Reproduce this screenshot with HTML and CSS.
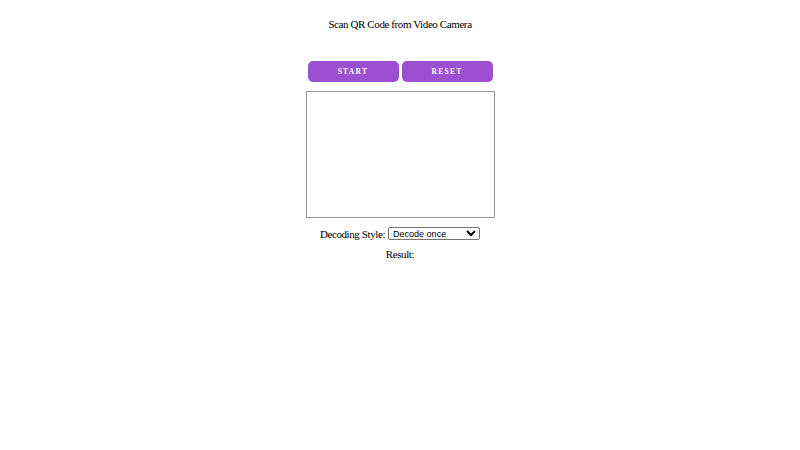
FILE: index.html
```html
<!DOCTYPE html>
<html lang="en">
<head>
    <meta charset="UTF-8">
    <meta name="viewport" content="width=device-width, initial-scale=1.0">
    <title>Scan QR Code</title>
    <link rel="stylesheet" href="styles.css">
</head>
<body>
    <div class="page">
        <p class="title">Scan QR Code from Video Camera</p>

        <div class="controls">
            <button id="startButton" class="btn">Start</button>
            <button id="resetButton" class="btn">Reset</button>
        </div>

        <div class="video-box">
            <video id="video" width="187" height="125"></video>
        </div>

        <div class="decode-row">
            <label for="decodingStyle">Decoding Style:</label>
            <select id="decodingStyle">
                <option value="once">Decode once</option>
                <option value="continuously">Decode continuously</option>
            </select>
        </div>

        <div class="result">
            <label>Result:</label>
            <span id="result"></span>
        </div>
    </div>
</body>
</html>
```

FILE: styles.css
```css
/* General Styles */
body {
    margin: 0;
    font-family: "Liberation Serif", "Times New Roman", serif;
    font-size: 11px;
    letter-spacing: -0.4px;
    color: #000;
    background: #fff;
}

.page {
    display: flex;
    flex-direction: column;
    align-items: center;
    padding-top: 16px;
}

.title {
    margin: 0;
    font-size: 11px;
    line-height: 16px;
    letter-spacing: -0.4px;
}

/* Buttons */
.controls {
    display: flex;
    gap: 3px;
    margin-top: 29px;
}

.btn {
    width: 91px;
    height: 21px;
    background: #9c4fd1;
    color: #fff;
    border: none;
    border-radius: 5px;
    font-family: "Liberation Serif", serif;
    font-size: 7.5px;
    font-weight: bold;
    letter-spacing: 1.3px;
    text-transform: uppercase;
    cursor: pointer;
}

/* Video */
.video-box {
    width: 187px;
    height: 125px;
    border: 1px solid #999;
    margin-top: 9px;
}

.video-box video {
    display: block;
}

.decode-row {
    margin-top: 9px;
    display: flex;
    align-items: center;
    gap: 3px;
}

.decode-row select {
    width: 92px;
    height: 13px;
    font-family: "Liberation Sans", Arial, sans-serif;
    font-size: 9px;
    letter-spacing: 0;
    padding: 0;
}

.result {
    margin-top: 8px;
}
```
